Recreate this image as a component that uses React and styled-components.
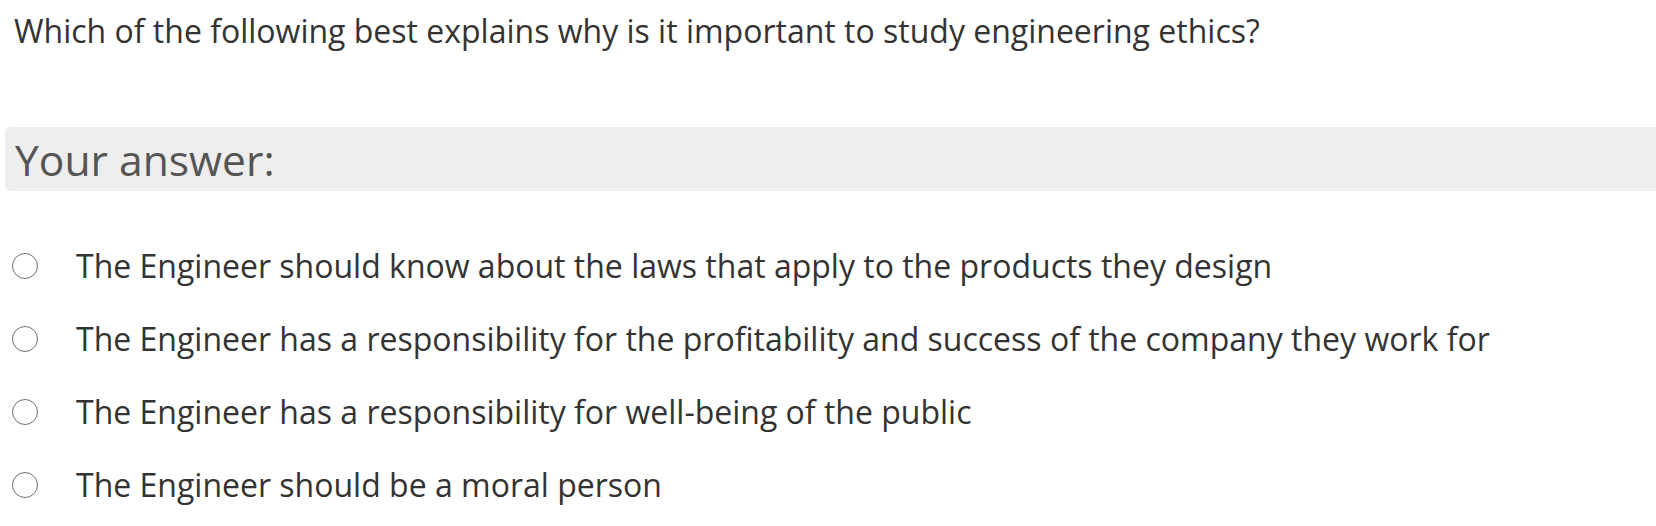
import styled, { createGlobalStyle } from 'styled-components';

const Global = createGlobalStyle`
  html, body {
    margin: 0;
    padding: 0;
    background: #ffffff;
  }
  body {
    font-family: "Open Sans", "Noto Sans", sans-serif;
    color: #333333;
  }
`;

const Page = styled.div`
  padding: 0 0 0 5px;
`;

const Question = styled.p`
  margin: 0;
  padding: 10px 0 0 9px;
  font-size: 32px;
  line-height: 42px;
  color: #333333;
`;

const AnswerBand = styled.div`
  margin-top: 75px;
  height: 64px;
  display: flex;
  align-items: center;
  padding-left: 10px;
  background: #eeeeee;
  border-radius: 6px 0 0 6px;
  font-size: 42.6px;
  color: #555555;
`;

const Options = styled.ul`
  list-style: none;
  margin: 0;
  padding: 54px 0 0 7px;
  display: grid;
  row-gap: 31px;
`;

const Option = styled.li`
  display: flex;
  align-items: center;
  gap: 38px;
  font-size: 32px;
  line-height: 42px;
  color: #333333;
`;

const Radio = styled.span`
  flex: none;
  width: 26px;
  height: 26px;
  box-sizing: border-box;
  border: 1.5px solid #707070;
  border-radius: 50%;
  background: #ffffff;
`;

const answers = [
  'The Engineer should know about the laws that apply to the products they design',
  'The Engineer has a responsibility for the profitability and success of the company they work for',
  'The Engineer has a responsibility for well-being of the public',
  'The Engineer should be a moral person',
];

export default function App() {
  return (
    <Page>
      <Global />
      <Question>
        Which of the following best explains why is it important to study engineering ethics?
      </Question>
      <AnswerBand>Your answer:</AnswerBand>
      <Options>
        {answers.map((a) => (
          <Option key={a}>
            <Radio />
            <span>{a}</span>
          </Option>
        ))}
      </Options>
    </Page>
  );
}
